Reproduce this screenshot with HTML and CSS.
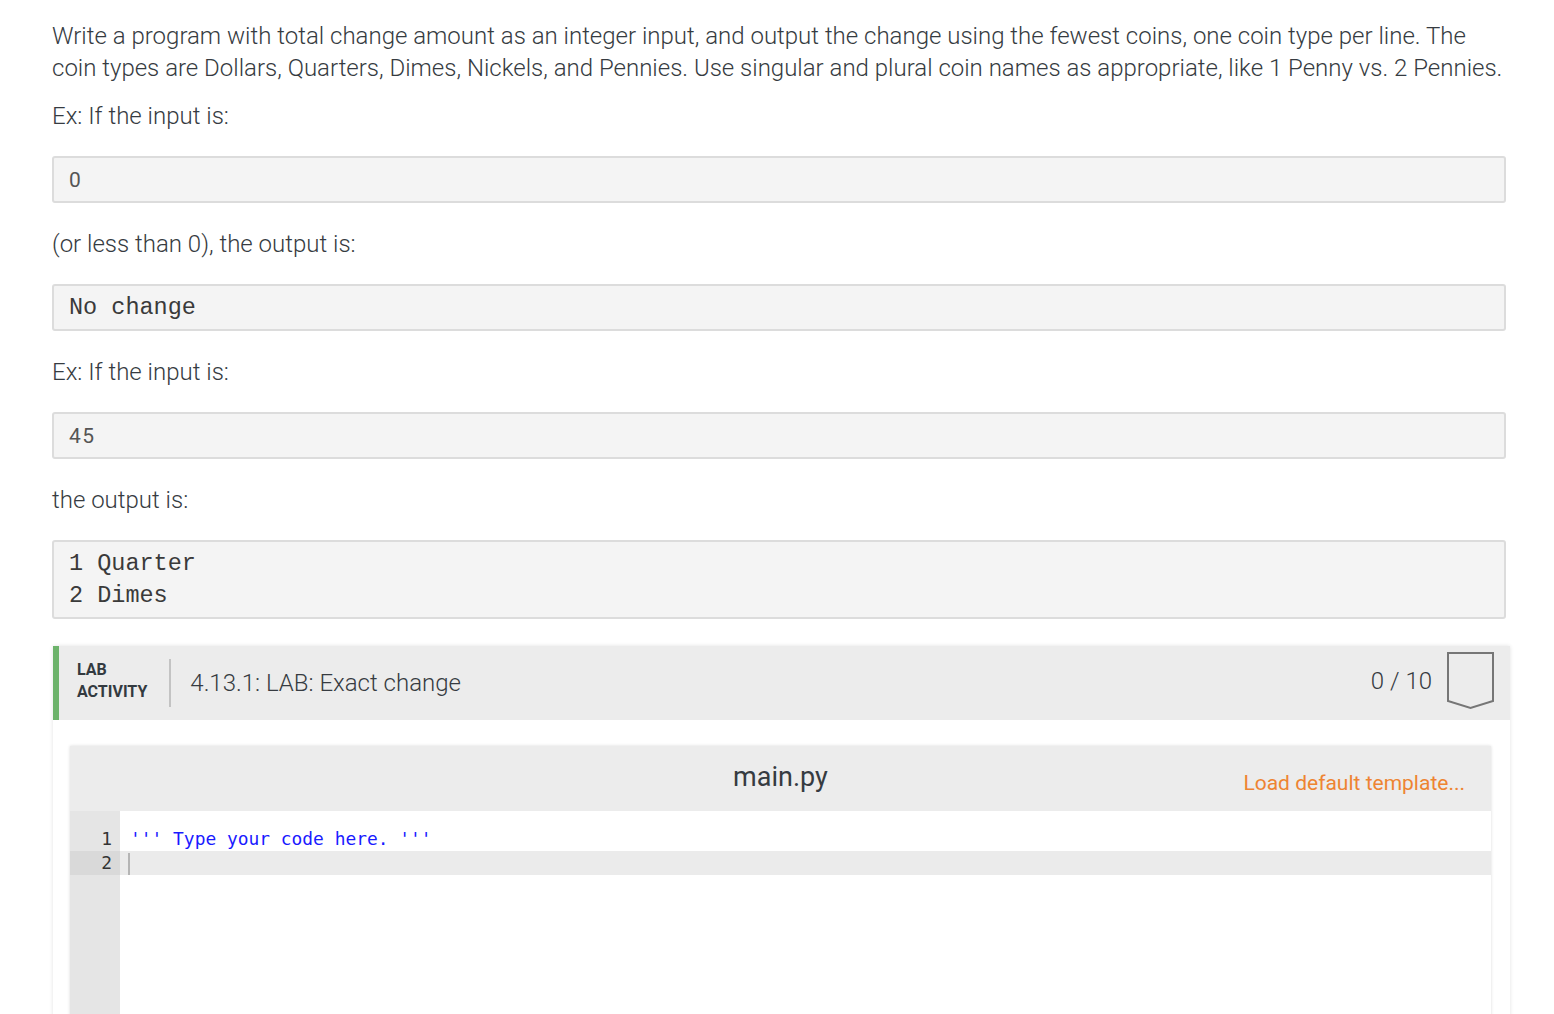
FILE: index.html
```html
<!DOCTYPE html>
<html>
<head>
<meta charset="utf-8">
<link rel="stylesheet" href="styles.css">
</head>
<body>
<div class="page">
  <p class="para">Write a program with total change amount as an integer input, and output the change using the fewest coins, one coin type per line. The coin types are Dollars, Quarters, Dimes, Nickels, and Pennies. Use singular and plural coin names as appropriate, like 1 Penny vs. 2 Pennies.</p>
  <p class="para">Ex: If the input is:</p>
  <pre class="code input">0</pre>
  <p class="para">(or less than 0), the output is:</p>
  <pre class="code output">No change</pre>
  <p class="para">Ex: If the input is:</p>
  <pre class="code input">45</pre>
  <p class="para">the output is:</p>
  <pre class="code output">1 Quarter
2 Dimes</pre>

  <div class="lab">
    <div class="lab-header">
      <div class="lab-label">LAB<br>ACTIVITY</div>
      <div class="lab-divider"></div>
      <div class="lab-title">4.13.1: LAB: Exact change</div>
      <div class="lab-score">0 / 10</div>
      <svg class="badge" width="50" height="60" viewBox="0 0 50 60">
        <path d="M2 2 H47 V50 L24.5 57 L2 50 Z" fill="none" stroke="#767676" stroke-width="2"/>
      </svg>
    </div>
    <div class="lab-body">
      <div class="editor">
        <div class="editor-header">
          <div class="filename">main.py</div>
          <div class="load">Load default template...</div>
        </div>
        <div class="editor-code">
          <div class="gutter">
            <div class="ln">1</div>
            <div class="ln active">2</div>
          </div>
          <div class="lines">
            <div class="line"><span class="str">''' Type your code here. '''</span></div>
            <div class="line active"><span class="cursor"></span></div>
          </div>
        </div>
      </div>
    </div>
  </div>
</div>
</body>
</html>
```

FILE: styles.css
```css
html, body {
  margin: 0;
  padding: 0;
  background: #ffffff;
}

.page {
  padding: 20px 48px 0 52px;
  font-family: Roboto, "Liberation Sans", sans-serif;
  font-weight: 300;
  color: #363b41;
  height: 994px;
  overflow: hidden;
}

.para {
  margin: 0 0 16px 0;
  font-size: 24px;
  line-height: 32px;
}

.code {
  margin: 24px 0 25px 0;
  background: #f4f4f4;
  border: 2px solid #dcdcdc;
  border-radius: 3px;
  padding: 6px 15px 5px 15px;
  line-height: 32px;
  color: #333;
}

.para + .code {
  margin-top: 24px;
}

.code + .para {
  margin-top: 0;
}

.code.input {
  font-family: Roboto, "Liberation Sans", sans-serif;
  font-weight: 400;
  font-size: 21px;
  letter-spacing: 1.5px;
  color: #555;
}

.code.output {
  font-family: "Liberation Mono", monospace;
  font-size: 23.5px;
  color: #3a3a3a;
}

.lab {
  margin: 27px -4px 0 1px;
  background: #fff;
  box-shadow: 0 0 4px rgba(0,0,0,0.12);
}

.lab-header {
  display: flex;
  align-items: center;
  background: #ececec;
  border-left: 6px solid #6db36b;
  height: 74px;
  padding: 0 14px 0 18px;
}

.lab-label {
  font-weight: 700;
  font-size: 16px;
  line-height: 22px;
  color: #333a40;
  margin-top: -4px;
}

.lab-divider {
  width: 2px;
  height: 48px;
  background: #c3c3c3;
  margin: 0 19px 0 22px;
}

.lab-title {
  font-size: 24px;
  flex: 1;
  color: #363b41;
}

.lab-score {
  font-size: 24px;
  color: #363b41;
  margin-right: 14px;
  position: relative;
  top: -2px;
}

.badge {
  display: block;
  margin-top: -4px;
}

.lab-body {
  padding: 26px 19px 0 17px;
}

.editor {
  box-shadow: 0 0 3px rgba(0,0,0,0.15);
}

.editor-header {
  position: relative;
  background: #ececec;
  height: 65px;
  display: flex;
  align-items: center;
  justify-content: center;
}

.filename {
  font-weight: 400;
  font-size: 27px;
  color: #363b41;
  margin-top: -4px;
}

.load {
  position: absolute;
  right: 26px;
  top: 25px;
  font-weight: 400;
  font-size: 21px;
  color: #ee8432;
}

.editor-code {
  display: flex;
  height: 220px;
  background: #fff;
}

.gutter {
  width: 50px;
  background: #e5e5e5;
  padding-top: 16px;
  font-family: "DejaVu Sans Mono", monospace;
  font-size: 17.9px;
  color: #333;
}

.ln {
  height: 24px;
  line-height: 24px;
  text-align: right;
  padding-right: 8px;
}

.ln.active {
  background: #d9d9d9;
}

.lines {
  flex: 1;
  padding-top: 16px;
  font-family: "DejaVu Sans Mono", monospace;
  font-size: 17.9px;
}

.line {
  height: 24px;
  line-height: 24px;
  padding-left: 10px;
}

.line.active {
  background: #ebebeb;
}

.str {
  color: #1a1aff;
  white-space: pre;
}

.cursor {
  display: inline-block;
  width: 2px;
  height: 22px;
  background: #b5b5b5;
  vertical-align: middle;
  margin-left: -2px;
}
```
